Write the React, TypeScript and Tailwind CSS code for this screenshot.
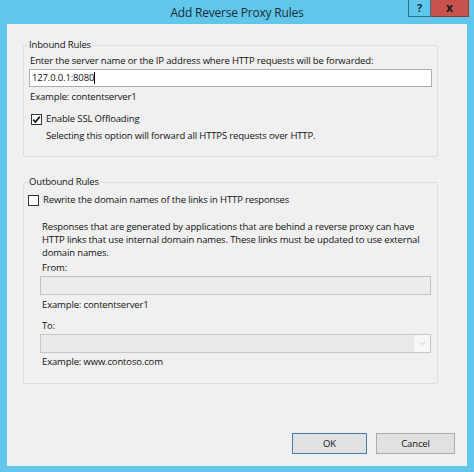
import { ChevronDown } from 'lucide-react';

const CheckBox = ({ checked }: { checked: boolean }) => (
  <div className="w-[11px] h-[11px] border border-[#333333] bg-white flex items-center justify-center shrink-0">
    {checked && (
      <svg width="9" height="9" viewBox="0 0 9 9">
        <path d="M1.2 4.6 L3.5 7 L7.8 1.6" fill="none" stroke="#1a1a1a" strokeWidth="1.7" />
      </svg>
    )}
  </div>
);

export default function App() {
  return (
    <div className="w-[474px] h-[472px] bg-[#60c7ea] flex flex-col font-['Open_Sans',sans-serif] text-[#111] text-[9.5px] tracking-[-0.15px] leading-[14px]">
      {/* Title bar */}
      <div className="relative h-[24px] flex items-center justify-center text-[12px] tracking-[-0.2px] text-[#1c2a35] pt-[2px]">
        Add Reverse Proxy Rules
        <div className="absolute top-0 right-[5px] flex h-[17px] tracking-normal">
          <div className="w-[23px] border border-t-0 border-[#2f6f8c] flex items-center justify-center font-bold text-[11px] text-[#12304a]">
            ?
          </div>
          <div className="w-[38px] bg-[#c8534c] border-b border-r border-[#8e3a36] flex items-center justify-center font-bold text-[12px] text-[#1a1a1a]">
            x
          </div>
        </div>
      </div>

      {/* Client area */}
      <div className="mx-[7px] mb-[6px] flex-1 bg-[#f0f0f0] flex flex-col pt-[14px] pl-[16px] pr-[12px] pb-[12px]">
        {/* Inbound Rules */}
        <fieldset className="w-[415px] border border-[#dcdcdc] rounded-[2px]">
          <legend className="ml-[4px] px-[1px] leading-[14px]">Inbound Rules</legend>
          <div className="pl-[5px] pr-[5px] pt-[2px] pb-[13px] flex flex-col">
            <div className="pl-[1px]">Enter the server name or the IP address where HTTP requests will be forwarded:</div>
            <div className="mt-[1px] h-[18px] border border-[#abadb3] bg-white pl-[2px] flex items-center">
              <span>127.0.0.1:8080</span>
              <span className="w-[1px] h-[12px] bg-black" />
            </div>
            <div className="mt-[3px] pl-[1px]">Example: contentserver1</div>
            <div className="mt-[8px] pl-[2px] flex items-center gap-[4px] h-[14px]">
              <CheckBox checked />
              <span>Enable SSL Offloading</span>
            </div>
            <div className="mt-[3px] pl-[17px]">Selecting this option will forward all HTTPS requests over HTTP.</div>
          </div>
        </fieldset>

        {/* Outbound Rules */}
        <fieldset className="mt-[18px] w-[415px] border border-[#dcdcdc] rounded-[2px]">
          <legend className="ml-[4px] px-[1px] leading-[14px]">Outbound Rules</legend>
          <div className="pl-[4px] pr-[6px] pb-[14px] flex flex-col">
            <div className="mt-[4px] flex items-center gap-[4px] h-[14px]">
              <CheckBox checked={false} />
              <span>Rewrite the domain names of the links in HTTP responses</span>
            </div>
            <div className="pl-[12px] flex flex-col">
              <p className="mt-[13px] pl-[2px] leading-[13px] whitespace-nowrap">
                Responses that are generated by applications that are behind a reverse proxy can have
                <br />
                HTTP links that use internal domain names. These links must be updated to use external
                <br />
                domain names.
              </p>
              <div className="mt-[2px] pl-[2px]">From:</div>
              <div className="mt-[1px] h-[19px] border border-[#c2c2c2] bg-[#ececec]" />
              <div className="mt-[3px] pl-[2px]">Example: contentserver1</div>
              <div className="mt-[7px] pl-[2px]">To:</div>
              <div className="mt-[1px] h-[19px] border border-[#c6c6c6] bg-[#eaeaea] flex justify-end">
                <div className="w-[16px] bg-[#f7f7f7] flex items-center justify-center">
                  <ChevronDown className="w-[9px] h-[9px] text-[#b4b4b4]" strokeWidth={2} />
                </div>
              </div>
              <div className="mt-[2px] pl-[2px]">Example: www.contoso.com</div>
            </div>
          </div>
        </fieldset>

        {/* Buttons */}
        <div className="mt-auto flex justify-end gap-[9px]">
          <button className="w-[75px] h-[21px] bg-[#e1e1e1] border border-[#3c7fb1] leading-[14px]">OK</button>
          <button className="w-[79px] h-[21px] bg-[#e1e1e1] border border-[#adadad] leading-[14px]">Cancel</button>
        </div>
      </div>
    </div>
  );
}
